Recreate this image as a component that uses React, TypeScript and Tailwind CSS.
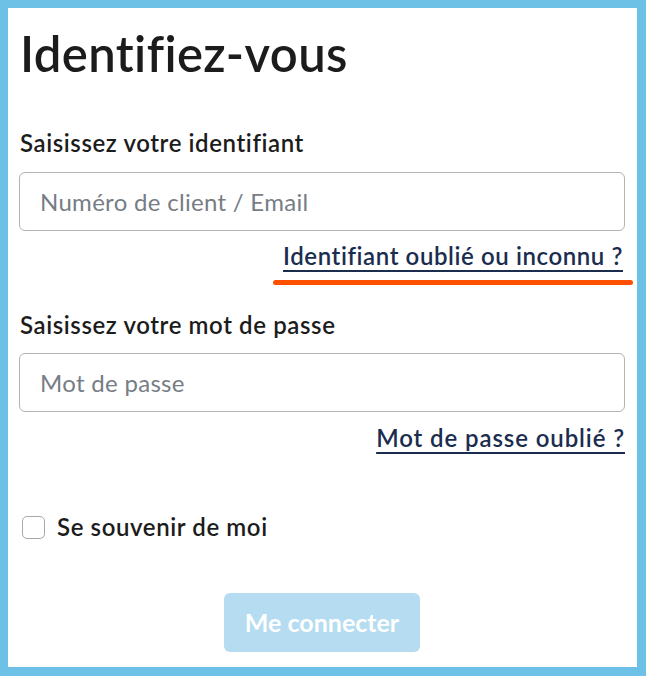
import React, { useState } from 'react';

export default function App() {
  const [remember, setRemember] = useState(false);

  return (
    <div
      className="box-border h-[676px] w-[646px] border-t-8 border-l-8 border-r-[9px] border-b-[9px] border-[#6dc0e6] bg-white pl-[11px] pr-[12px] text-[#1c1c1c]"
      style={{ fontFamily: 'Lato, "Open Sans", sans-serif' }}
    >
      <h1 className="mt-[16px] pl-px text-[49px] font-semibold leading-[58px] tracking-[0.4px]">
        Identifiez-vous
      </h1>

      {/* Identifiant */}
      <label className="mt-[47px] block pl-px text-[24px] font-semibold leading-[28px] tracking-[0.6px]">
        Saisissez votre identifiant
      </label>
      <input
        type="text"
        placeholder="Numéro de client / Email"
        className="mt-[15px] block h-[59px] w-full rounded-[6px] border border-[#b3b3b3] px-[20px] text-[24px] tracking-[0.3px] text-[#333] outline-none placeholder:text-[#767d85]"
      />
      <div className="mt-[11px] flex justify-end pr-[2px]">
        <a
          href="#"
          className="relative text-[24px] font-semibold leading-[28px] tracking-[0.6px] text-[#1b2d4f] underline decoration-2 underline-offset-[5px]"
        >
          Identifiant oublié ou inconnu ?
          <span className="absolute top-[38px] -left-[10px] -right-[10px] h-[5px] rounded-full bg-[#ff5000]" />
        </a>
      </div>

      {/* Mot de passe */}
      <label className="mt-[41px] block pl-px text-[24px] font-semibold leading-[28px] tracking-[0.6px]">
        Saisissez votre mot de passe
      </label>
      <input
        type="password"
        placeholder="Mot de passe"
        className="mt-[14px] block h-[59px] w-full rounded-[6px] border border-[#b3b3b3] px-[20px] text-[24px] tracking-[0.3px] text-[#333] outline-none placeholder:text-[#767d85]"
      />
      <div className="mt-[12px] flex justify-end">
        <a
          href="#"
          className="text-[24px] font-semibold leading-[28px] tracking-[0.9px] text-[#1b2d4f] underline decoration-2 underline-offset-[5px]"
        >
          Mot de passe oublié ?
        </a>
      </div>

      {/* Se souvenir */}
      <label className="mt-[61px] flex cursor-pointer items-center gap-[12px] pl-[3px]">
        <input
          type="checkbox"
          checked={remember}
          onChange={() => setRemember(!remember)}
          className="sr-only"
        />
        <span className="h-[23px] w-[23px] rounded-[5px] border border-[#a9a9a9] bg-white" />
        <span className="text-[24px] font-semibold leading-[28px] tracking-[0.6px]">Se souvenir de moi</span>
      </label>

      <div className="mt-[52px] flex justify-center">
        <button
          type="button"
          disabled
          className="h-[59px] w-[196px] rounded-[6px] bg-[#b5dcf0] text-[25px] font-bold text-white"
        >
          Me connecter
        </button>
      </div>
    </div>
  );
}
